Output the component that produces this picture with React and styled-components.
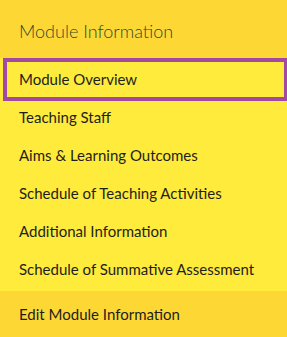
import React from 'react';
import styled, {createGlobalStyle} from 'styled-components';

const Global = createGlobalStyle`
    body {
        margin: 0;
        background: #fdd835;
        font-family: Lato, "Open Sans", sans-serif;
    }
`;

const Panel = styled.nav`
    width: 287px;
    height: 337px;
    display: flex;
    flex-direction: column;
    background: #ffeb3b;
    overflow: hidden;
`;

const Header = styled.h2`
    margin: 0;
    height: 58px;
    box-sizing: border-box;
    padding: 19px 19px 0;
    background: #fdd835;
    font-size: 18px;
    font-weight: 300;
    line-height: 24px;
    color: #2f4a30;
`;

const List = styled.ul`
    list-style: none;
    margin: 0;
    padding: 0;
`;

const Item = styled.li`
    box-sizing: border-box;
    height: ${({selected}) => (selected ? '43px' : '38px')};
    margin: ${({selected}) => (selected ? '0 -1px 0 3px' : '0')};
    padding: ${({selected}) => (selected ? '6px 12px 0' : '5px 19px 0')};
    border: ${({selected}) => (selected ? '4px solid #a349a4' : 'none')};
    font-size: 15px;
    line-height: 22px;
    color: #1e1e1e;
    cursor: pointer;
`;

const Footer = styled.div`
    flex: 1;
    background: #fdd835;
    padding: 12px 19px 0;
    font-size: 15px;
    line-height: 22px;
    color: #1e1e1e;
`;

const items = [
    'Module Overview',
    'Teaching Staff',
    'Aims & Learning Outcomes',
    'Schedule of Teaching Activities',
    'Additional Information',
    'Schedule of Summative Assessment',
];

export default function App() {
    return (
        <Panel>
            <Global/>
            <Header>Module Information</Header>
            <List>
                {items.map((label, i) => (
                    <Item key={label} selected={i === 0}>{label}</Item>
                ))}
            </List>
            <Footer>Edit Module Information</Footer>
        </Panel>
    );
}
